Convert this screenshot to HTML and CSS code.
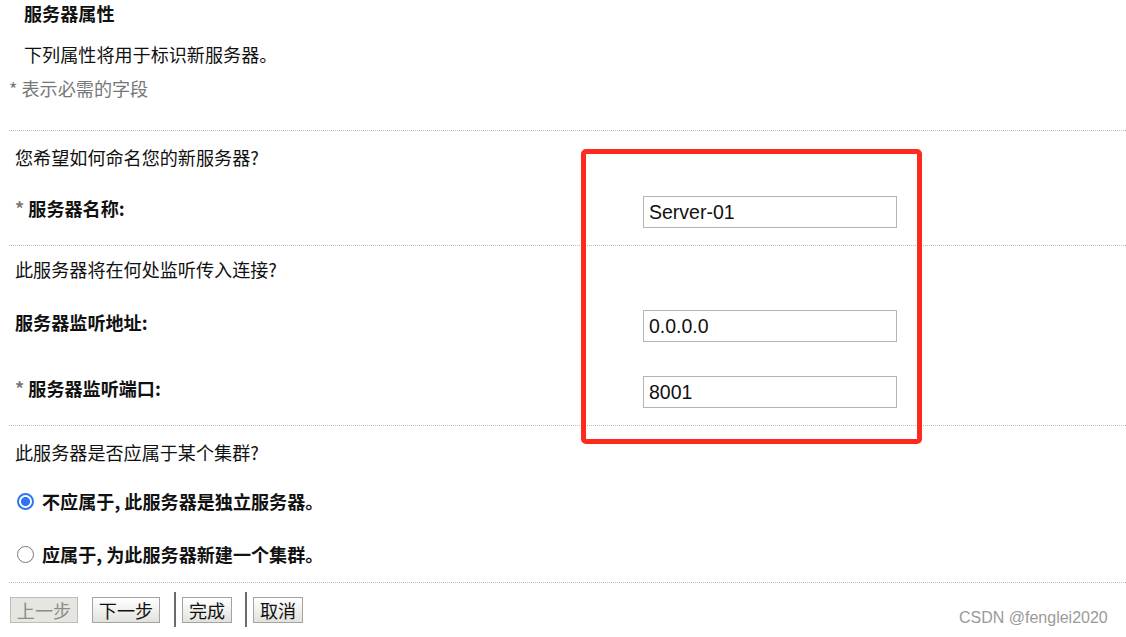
FILE: index.html
```html
<!DOCTYPE html>
<html lang="zh-CN">
<head>
<meta charset="utf-8">
<title>服务器属性</title>
<link rel="stylesheet" href="styles.css">
</head>
<body>
<div class="page">
  <div class="intro">
    <div class="title">服务器属性</div>
    <div class="desc">下列属性将用于标识新服务器。</div>
    <div class="note">* 表示必需的字段</div>
  </div>

  <section class="sec sec-name">
    <div class="question">您希望如何命名您的新服务器?</div>
    <div class="field first">
      <label class="label"><span class="req">*</span> 服务器名称:</label>
      <input class="text" type="text" value="Server-01">
    </div>
  </section>

  <section class="sec sec-listen">
    <div class="question">此服务器将在何处监听传入连接?</div>
    <div class="field first">
      <label class="label">服务器监听地址:</label>
      <input class="text" type="text" value="0.0.0.0">
    </div>
    <div class="field second">
      <label class="label"><span class="req">*</span> 服务器监听端口:</label>
      <input class="text" type="text" value="8001">
    </div>
  </section>

  <section class="sec sec-cluster">
    <div class="question">此服务器是否应属于某个集群?</div>
    <label class="option first"><input class="radio" type="radio" name="cluster" checked><span>不应属于, 此服务器是独立服务器。</span></label>
    <label class="option second"><input class="radio" type="radio" name="cluster"><span>应属于, 为此服务器新建一个集群。</span></label>
  </section>

  <div class="actions">
    <button class="btn wide" disabled>上一步</button>
    <button class="btn wide next">下一步</button>
    <span class="sep"></span>
    <button class="btn short">完成</button>
    <span class="sep"></span>
    <button class="btn short">取消</button>
  </div>
</div>
<div class="highlight"></div>
<div class="watermark">CSDN @fenglei2020</div>
</body>
</html>
```

FILE: styles.css
```css
html, body {
  margin: 0;
  padding: 0;
  background: #ffffff;
}
body {
  font-family: "Noto Sans CJK SC", "Liberation Sans", sans-serif;
  font-size: 18.1px;
  color: #111;
  width: 1126px;
  height: 637px;
  overflow: hidden;
  position: relative;
}
.page {
  padding-left: 9px;
}
.intro {
  display: flex;
  flex-direction: column;
}
.title {
  font-weight: bold;
  line-height: 26px;
  padding-left: 15px;
}
.desc {
  line-height: 28px;
  margin-top: 14px;
  padding-left: 15px;
}
.note {
  line-height: 28px;
  margin-top: 6px;
  color: #777;
  height: 28px;
  margin-bottom: 28px;
}
.sec {
  border-top: 1px dotted #bdbdbd;
  padding-left: 6px;
  display: flex;
  flex-direction: column;
}
.question {
  line-height: 28px;
}
.sec-name { padding-top: 12px; padding-bottom: 17px; }
.sec-listen { padding-top: 9px; padding-bottom: 17px; }
.sec-cluster { padding-top: 12px; padding-bottom: 14px; }
.sec-name .field.first { margin-top: 25px; }
.sec-listen .field.first { margin-top: 27px; }
.sec-listen .field.second { margin-top: 34px; }
.field {
  display: grid;
  grid-template-columns: 628px 254px;
  align-items: start;
}
.label {
  font-weight: bold;
  line-height: 24px;
}
.req {
  color: #777;
}
.text {
  box-sizing: border-box;
  width: 254px;
  height: 32px;
  margin: 0;
  border: 1px solid #b4b4b4;
  padding: 0 5px;
  font-family: "Liberation Sans", Arial, sans-serif;
  font-size: 19.5px;
  color: #111;
  background: #fff;
  outline: none;
}
.option {
  display: flex;
  align-items: center;
  gap: 8px;
  line-height: 28px;
  font-weight: bold;
  padding-left: 2px;
}
.option.first { margin-top: 21px; }
.option.second { margin-top: 25px; }
.radio {
  appearance: none;
  -webkit-appearance: none;
  box-sizing: border-box;
  width: 17px;
  height: 17px;
  margin: 0;
  border: 1.5px solid #767676;
  border-radius: 50%;
  background: #fff;
}
.radio:checked {
  border: 2px solid #2f74f2;
  background: radial-gradient(circle, #2f74f2 0 4.2px, #fff 4.8px);
}
.actions {
  border-top: 1px dotted #bdbdbd;
  display: flex;
  align-items: center;
  padding-top: 9px;
  padding-left: 1px;
}
.btn {
  box-sizing: border-box;
  height: 26px;
  padding: 0 5px;
  margin: 0;
  border: 1px solid #a3a3a3;
  border-radius: 0;
  background: linear-gradient(#ffffff, #e2e2dc);
  font-family: "Noto Sans CJK SC", sans-serif;
  font-size: 18.1px;
  line-height: 24px;
  color: #111;
}
.btn.wide { width: 68px; }
.btn.short { width: 50px; padding: 0; }
.btn:disabled {
  color: #8c8c8c;
  background: #e6e6e0;
  border-color: #bcbcbc;
}
.btn.next { margin-left: 14px; }
.sep {
  width: 2px;
  height: 35px;
  background: #6b6b6b;
  margin: 0 6px 0 14px;
}
.sep + .btn + .sep { margin-left: 13px; }
.highlight {
  position: absolute;
  left: 581px;
  top: 149px;
  width: 341px;
  height: 295px;
  box-sizing: border-box;
  border: 5px solid #ff2a1e;
  border-radius: 5px;
}
.watermark {
  position: absolute;
  left: 959px;
  top: 608px;
  font-family: "Liberation Sans", Arial, sans-serif;
  font-size: 16px;
  line-height: 20px;
  color: #9a9a9a;
  text-shadow: 0 0 1px #fff;
}
```
